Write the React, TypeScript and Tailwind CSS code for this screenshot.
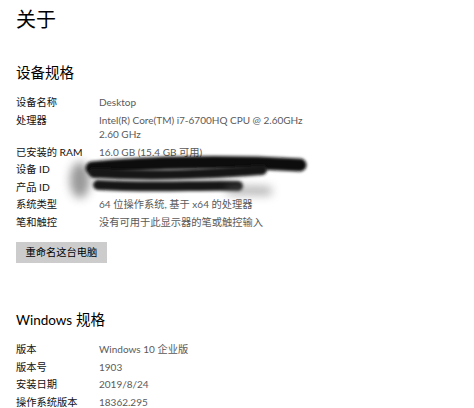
import type { ReactNode } from "react";

const font = {
  fontFamily: 'Lato, "Noto Sans CJK SC", sans-serif',
};

type Spec = { label: string; value: ReactNode };

// CJK glyphs render a touch larger than the latin text in the value column
function Mixed({ text }: { text: string }) {
  const parts = text.split(/([\u3400-\u9fff\uff00-\uffef]+)/);
  return (
    <>
      {parts.map((p, i) =>
        i % 2 === 1 ? (
          <span key={i} className="text-[10.25px]">
            {p}
          </span>
        ) : (
          p
        ),
      )}
    </>
  );
}

const deviceSpecs: Spec[] = [
  { label: "设备名称", value: "Desktop" },
  {
    label: "处理器",
    value: (
      <>
        Intel(R) Core(TM) i7-6700HQ CPU @ 2.60GHz
        <br />
        2.60 GHz
      </>
    ),
  },
  { label: "已安装的 RAM", value: <Mixed text="16.0 GB (15.4 GB 可用)" /> },
  { label: "设备 ID", value: "" },
  { label: "产品 ID", value: "" },
  { label: "系统类型", value: <Mixed text="64 位操作系统, 基于 x64 的处理器" /> },
  { label: "笔和触控", value: <Mixed text="没有可用于此显示器的笔或触控输入" /> },
];

const windowsSpecs: Spec[] = [
  { label: "版本", value: <Mixed text="Windows 10 企业版" /> },
  { label: "版本号", value: "1903" },
  { label: "安装日期", value: "2019/8/24" },
  { label: "操作系统版本", value: "18362.295" },
];

function SpecList({ rows }: { rows: Spec[] }) {
  return (
    <div className="grid grid-cols-[83px_1fr] gap-y-[3px] text-[10.25px] leading-[14.5px]">
      {rows.map((r) => (
        <div key={r.label} className="contents">
          <div className="text-[#111]">{r.label}</div>
          <div className="min-h-[14.5px] text-[10px] leading-[14.5px] text-[#5a5a5a]">{r.value}</div>
        </div>
      ))}
    </div>
  );
}

// the hand-drawn black scribble that hides the IDs
function Redaction() {
  return (
    <svg
      className="pointer-events-none absolute left-0 top-0"
      width="474"
      height="408"
      viewBox="0 0 474 408"
    >
      <defs>
        <filter id="blur-a" filterUnits="userSpaceOnUse" x="0" y="100" width="474" height="150">
          <feGaussianBlur stdDeviation="1.8" />
        </filter>
        <filter id="blur-b" filterUnits="userSpaceOnUse" x="0" y="100" width="474" height="150">
          <feGaussianBlur stdDeviation="5" />
        </filter>
      </defs>
      <ellipse cx="80" cy="180" rx="10" ry="18" fill="#555" opacity="0.6" filter="url(#blur-b)" />
      <path d="M92 168 C150 162 230 161 300 165" stroke="#111" strokeWidth="13" fill="none" strokeLinecap="round" filter="url(#blur-a)" />
      <path d="M94 173 C160 177 220 173 262 170" stroke="#181818" strokeWidth="10" fill="none" strokeLinecap="round" filter="url(#blur-a)" />
      <path d="M98 185 C150 188 200 185 238 186" stroke="#151515" strokeWidth="10" fill="none" strokeLinecap="round" filter="url(#blur-a)" />
      <path d="M230 190 L268 191" stroke="#666" strokeWidth="8" fill="none" strokeLinecap="round" opacity="0.55" filter="url(#blur-b)" />
    </svg>
  );
}

export default function App() {
  return (
    <div className="relative h-[408px] w-[474px] overflow-hidden bg-white pl-4 pt-[5px] text-black" style={font}>
      <h1 className="text-[20px] leading-[28px]">关于</h1>

      <h2 className="mt-[30px] text-[14.5px] leading-[20px]">设备规格</h2>
      <div className="mt-[12px]">
        <SpecList rows={deviceSpecs} />
      </div>

      <button className="mt-[13px] h-[21px] w-[91px] bg-[#cccccc] text-[10.25px] text-black">
        重命名这台电脑
      </button>

      <h2 className="mt-[47px] text-[14.5px] leading-[20px]">
        <span className="text-[13.5px]">Windows</span> 规格
      </h2>
      <div className="mt-[12px]">
        <SpecList rows={windowsSpecs} />
      </div>

      <Redaction />
    </div>
  );
}
